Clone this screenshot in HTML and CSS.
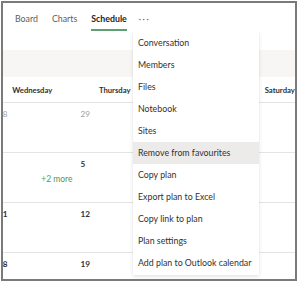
FILE: index.html
```html
<!DOCTYPE html>
<html>
<head>
<meta charset="utf-8">
<link rel="stylesheet" href="styles.css">
</head>
<body>
<div class="frame">
  <nav class="tabs">
    <span class="tab">Board</span>
    <span class="tab">Charts</span>
    <span class="tab active">Schedule</span>
    <span class="tab dots">···</span>
  </nav>
  <div class="band"></div>
  <div class="calendar">
    <div class="row head">
      <div class="cell">Wednesday</div>
      <div class="cell">Thursday</div>
      <div class="cell"></div>
      <div class="cell">Saturday</div>
    </div>
    <div class="row week">
      <div class="cell"><span class="num dim">28</span></div>
      <div class="cell"><span class="num dim">29</span></div>
      <div class="cell"></div>
      <div class="cell"></div>
    </div>
    <div class="row week">
      <div class="cell"><span class="num"></span><span class="more">+2 more</span></div>
      <div class="cell"><span class="num">5</span></div>
      <div class="cell"></div>
      <div class="cell"></div>
    </div>
    <div class="row week">
      <div class="cell"><span class="num">11</span></div>
      <div class="cell"><span class="num">12</span></div>
      <div class="cell"></div>
      <div class="cell"></div>
    </div>
    <div class="row week">
      <div class="cell"><span class="num">18</span></div>
      <div class="cell"><span class="num">19</span></div>
      <div class="cell"></div>
      <div class="cell"></div>
    </div>
  </div>
  <ul class="menu">
    <li>Conversation</li>
    <li>Members</li>
    <li>Files</li>
    <li>Notebook</li>
    <li>Sites</li>
    <li class="hover">Remove from favourites</li>
    <li>Copy plan</li>
    <li>Export plan to Excel</li>
    <li>Copy link to plan</li>
    <li>Plan settings</li>
    <li>Add plan to Outlook calendar</li>
  </ul>
</div>
</body>
</html>
```

FILE: styles.css
```css
html, body {
  margin: 0;
  padding: 0;
  background: #ffffff;
}
body {
  font-family: "Lato", "Open Sans", sans-serif;
  color: #323130;
}
.frame {
  position: relative;
  margin: 1px 0 0 1px;
  width: 296px;
  height: 280px;
  box-sizing: border-box;
  border: 2px solid #7a7a7a;
  overflow: hidden;
  background: #fff;
}
.tabs {
  display: flex;
  gap: 14px;
  padding: 10px 0 0 12px;
  height: 47px;
  box-sizing: border-box;
  font-size: 8.8px;
  line-height: 12px;
}
.tab {
  color: #605e5c;
  padding-bottom: 4px;
  height: 12px;
}
.tab.active {
  color: #252423;
  font-weight: 700;
  border-bottom: 2px solid #5e9f73;
}
.dots {
  margin-left: -2px;
  letter-spacing: 1.5px;
}
.band {
  height: 27px;
  background: #f7f6f4;
}
.calendar {
  margin-left: -12px;
}
.row {
  display: grid;
  grid-template-columns: repeat(4, 82.5px);
  border-bottom: 1px solid #e6e4e2;
}
.head {
  height: 25px;
  align-items: center;
  font-size: 7.7px;
  font-weight: 700;
  color: #323130;
}
.head .cell {
  text-align: center;
}
.week {
  height: 49px;
}
.week .cell {
  display: flex;
  flex-direction: column;
  padding: 6px 1px 0 7px;
}
.num {
  font-size: 8.2px;
  font-weight: 700;
  line-height: 11px;
  min-height: 11px;
  color: #323130;
}
.num.dim {
  font-weight: 400;
  color: #a19f9d;
}
.more {
  align-self: flex-end;
  margin-top: 4px;
  font-size: 8.5px;
  line-height: 11px;
  color: #4f9a66;
}
.menu {
  position: absolute;
  left: 130px;
  top: 28px;
  width: 126px;
  margin: 0;
  padding: 1px 0;
  list-style: none;
  background: #fff;
  box-shadow: 0 1.6px 3.6px rgba(0,0,0,0.13), 0 0.3px 0.9px rgba(0,0,0,0.11);
}
.menu li {
  height: 22px;
  line-height: 22px;
  padding-left: 5px;
  font-size: 8.8px;
  color: #323130;
  white-space: nowrap;
}
.menu li.hover {
  background: #edebe9;
}
```
